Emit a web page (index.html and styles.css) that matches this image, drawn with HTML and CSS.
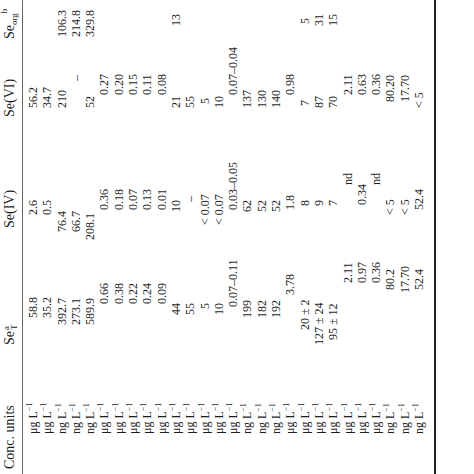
FILE: index.html
```html
<!DOCTYPE html>
<html>
<head>
<meta charset="utf-8">
<link rel="stylesheet" href="styles.css">
</head>
<body>
<div class="sheet">
  <div class="row head">
    <div class="p5">Conc. units</div>
    <div class="p9">Se<span class="stack"><span class="sp">a</span><span class="sb">T</span></span></div>
    <div class="p21">Se(IV)</div>
    <div class="p22">Se(VI)</div>
    <div class="p5">Se<sub>org</sub><sup>b</sup></div>
  </div>
  <div class="body">
    <div class="row"><div class="u">μg L<sup>−1</sup></div><div class="p36">58.8</div><div class="p34">2.6</div><div class="p31">56.2</div><div></div></div>
    <div class="row"><div class="u">μg L<sup>−1</sup></div><div class="p36">35.2</div><div class="p34">0.5</div><div class="p31">34.7</div><div></div></div>
    <div class="row"><div class="u">ng L<sup>−1</sup></div><div class="p29">392.7</div><div class="p17">76.4</div><div class="p31">210</div><div class="p7">106.3</div></div>
    <div class="row"><div class="u">ng L<sup>−1</sup></div><div class="p29">273.1</div><div class="p17">66.7</div><div class="p58">–</div><div class="p7">214.8</div></div>
    <div class="row"><div class="u">ng L<sup>−1</sup></div><div class="p29">589.9</div><div class="p9">208.1</div><div class="p31">52</div><div class="p7">329.8</div></div>
    <div class="row"><div class="u">μg L<sup>−1</sup></div><div class="p50">0.66</div><div class="p39">0.36</div><div class="p44">0.27</div><div></div></div>
    <div class="row"><div class="u">μg L<sup>−1</sup></div><div class="p50">0.38</div><div class="p39">0.18</div><div class="p44">0.20</div><div></div></div>
    <div class="row"><div class="u">μg L<sup>−1</sup></div><div class="p50">0.22</div><div class="p39">0.07</div><div class="p44">0.15</div><div></div></div>
    <div class="row"><div class="u">μg L<sup>−1</sup></div><div class="p50">0.24</div><div class="p39">0.13</div><div class="p44">0.11</div><div></div></div>
    <div class="row"><div class="u">μg L<sup>−1</sup></div><div class="p50">0.09</div><div class="p39">0.01</div><div class="p44">0.08</div><div></div></div>
    <div class="row"><div class="u">μg L<sup>−1</sup></div><div class="p39">44</div><div class="p37">10</div><div class="p31">21</div><div class="p18">13</div></div>
    <div class="row"><div class="u">μg L<sup>−1</sup></div><div class="p39">55</div><div class="p47">–</div><div class="p31">55</div><div></div></div>
    <div class="row"><div class="u">μg L<sup>−1</sup></div><div class="p45">5</div><div class="p24">&lt; 0.07</div><div class="p35">5</div><div></div></div>
    <div class="row"><div class="u">μg L<sup>−1</sup></div><div class="p39">10</div><div class="p24">&lt; 0.07</div><div class="p31">10</div><div></div></div>
    <div class="row"><div class="u">μg L<sup>−1</sup></div><div class="p47">0.07–0.11</div><div class="p39">0.03–0.05</div><div class="p44">0.07–0.04</div><div></div></div>
    <div class="row"><div class="u">ng L<sup>−1</sup></div><div class="p36">199</div><div class="p37">62</div><div class="p31">137</div><div></div></div>
    <div class="row"><div class="u">ng L<sup>−1</sup></div><div class="p36">182</div><div class="p37">52</div><div class="p31">130</div><div></div></div>
    <div class="row"><div class="u">ng L<sup>−1</sup></div><div class="p36">192</div><div class="p37">52</div><div class="p31">140</div><div></div></div>
    <div class="row"><div class="u">μg L<sup>−1</sup></div><div class="p59">3.78</div><div class="p39">1.8</div><div class="p44">0.98</div><div></div></div>
    <div class="row"><div class="u">μg L<sup>−1</sup></div><div class="p24">20 ± 2</div><div class="p43">8</div><div class="p33">7</div><div class="p20">5</div></div>
    <div class="row"><div class="u">μg L<sup>−1</sup></div><div class="p9">127 ± 24</div><div class="p43">9</div><div class="p31">87</div><div class="p18">31</div></div>
    <div class="row"><div class="u">μg L<sup>−1</sup></div><div class="p14">95 ± 12</div><div class="p43">7</div><div class="p31">70</div><div class="p18">15</div></div>
    <div class="row"><div class="u">μg L<sup>−1</sup></div><div class="p71">2.11</div><div class="p64">nd</div><div class="p44">2.11</div><div></div></div>
    <div class="row"><div class="u">μg L<sup>−1</sup></div><div class="p71">0.97</div><div class="p44">0.34</div><div class="p44">0.63</div><div></div></div>
    <div class="row"><div class="u">μg L<sup>−1</sup></div><div class="p71">0.36</div><div class="p64">nd</div><div class="p44">0.36</div><div></div></div>
    <div class="row"><div class="u">ng L<sup>−1</sup></div><div class="p64">80.2</div><div class="p34">&lt; 5</div><div class="p37">80.20</div><div></div></div>
    <div class="row"><div class="u">ng L<sup>−1</sup></div><div class="p61">17.70</div><div class="p34">&lt; 5</div><div class="p37">17.70</div><div></div></div>
    <div class="row"><div class="u">ng L<sup>−1</sup></div><div class="p64">52.4</div><div class="p39">52.4</div><div class="p31">&lt; 5</div><div></div></div>
  </div>
</div>
</body>
</html>
```
FILE: styles.css
```css
html, body {
  margin: 0;
  padding: 0;
  background: #fff;
}
body {
  width: 474px;
  height: 474px;
  overflow: hidden;
}
.sheet {
  width: 474px;
  height: 474px;
  transform: rotate(-90deg);
  font-family: "Liberation Serif", "Times New Roman", serif;
  color: #1e1e1e;
}
.row {
  display: grid;
  grid-template-columns: 120px 105px 110px 95px 44px;
  white-space: nowrap;
}
.head {
  font-size: 14px;
  line-height: 18px;
  height: 21px;
  padding-top: 1px;
  border-bottom: 1px solid #666;
}
.body {
  padding-top: 3px;
  padding-bottom: 8px;
  border-bottom: 2px solid #222;
}
.body .row {
  font-size: 12px;
  line-height: 14.3px;
  height: 14.3px;
}
sup {
  font-size: 8px;
  line-height: 0;
  vertical-align: 5px;
}
sub {
  font-size: 9px;
  line-height: 0;
  vertical-align: -3px;
}
.head sup { font-size: 9px; vertical-align: 7px; }
.stack {
  display: inline-flex;
  flex-direction: column;
  vertical-align: 5px;
  line-height: 8px;
  font-size: 9px;
  margin-left: 1px;
}
.u { padding-left: 40px; }
.p5 { padding-left: 5px; }
.p7 { padding-left: 7px; }
.p9 { padding-left: 9px; }
.p14 { padding-left: 14px; }
.p17 { padding-left: 17px; }
.p18 { padding-left: 18px; }
.p20 { padding-left: 20px; }
.p21 { padding-left: 21px; }
.p22 { padding-left: 22px; }
.p24 { padding-left: 24px; }
.p29 { padding-left: 29px; }
.p31 { padding-left: 31px; }
.p33 { padding-left: 33px; }
.p34 { padding-left: 34px; }
.p35 { padding-left: 35px; }
.p36 { padding-left: 36px; }
.p37 { padding-left: 37px; }
.p39 { padding-left: 39px; }
.p43 { padding-left: 43px; }
.p44 { padding-left: 44px; }
.p45 { padding-left: 45px; }
.p47 { padding-left: 47px; }
.p50 { padding-left: 50px; }
.p58 { padding-left: 58px; }
.p59 { padding-left: 59px; }
.p61 { padding-left: 61px; }
.p64 { padding-left: 64px; }
.p71 { padding-left: 71px; }
```
